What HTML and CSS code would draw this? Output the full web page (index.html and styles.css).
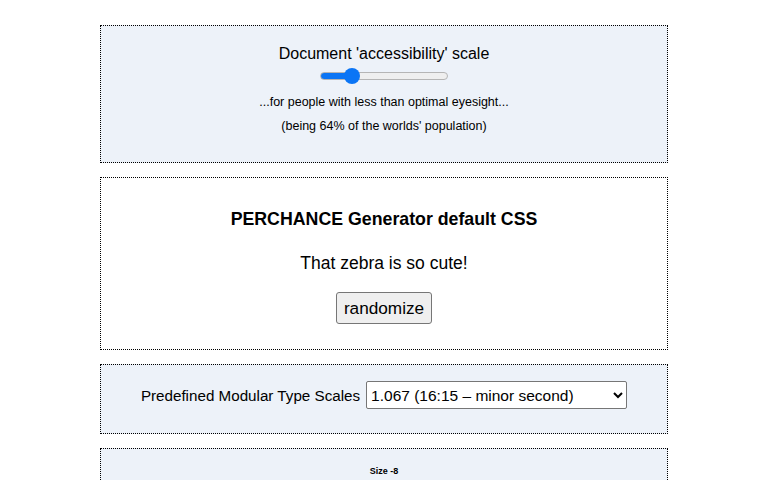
FILE: index.html
```html
<!DOCTYPE html>
<html>
<head>
<meta charset="utf-8">
<link rel="stylesheet" href="styles.css">
</head>
<body>
<div class="page">
  <section class="box tinted scale-box">
    <div class="scale-title">Document 'accessibility' scale</div>
    <input class="slider" type="range" min="0" max="100" value="21">
    <p class="note first">...for people with less than optimal eyesight...</p>
    <p class="note">(being <span class="pct">64%</span> of the worlds' population)</p>
  </section>
  <section class="box plain gen-box">
    <h1 class="gen-title">PERCHANCE Generator default CSS</h1>
    <p class="gen-output">That zebra is so cute!</p>
    <button class="rand-btn">randomize</button>
  </section>
  <section class="box tinted select-box">
    <label class="select-label">Predefined Modular Type Scales</label>
    <select class="scale-select">
      <option>1.067 (16:15 – minor second)</option>
    </select>
  </section>
  <section class="box tinted size-box">
    <div class="size-label">Size -8</div>
  </section>
</div>
</body>
</html>
```
FILE: styles.css
```css
html, body {
  margin: 0;
  padding: 0;
  background: #fff;
  font-family: "Liberation Sans", Arial, sans-serif;
  color: #000;
}
.page {
  width: 568px;
  margin: 25px auto 0;
  display: flex;
  flex-direction: column;
  gap: 14px;
}
.box {
  border: 1px dotted #000;
  box-sizing: border-box;
  text-align: center;
}
.tinted { background: #edf2f9; }
.plain { background: #fff; }
.scale-box {
  height: 138px;
  padding-top: 18px;
}
.scale-title {
  font-size: 16px;
  line-height: 20px;
}
.slider {
  -webkit-appearance: none;
  appearance: none;
  display: block;
  margin: 8px auto 0;
  width: 128px;
  height: 8px;
  border-radius: 4px;
  border: 1px solid #b5b5b5;
  box-sizing: border-box;
  background: linear-gradient(to right, #0b75f5 0, #0b75f5 21%, #efefef 21%);
  outline: none;
}
.slider::-webkit-slider-thumb {
  -webkit-appearance: none;
  appearance: none;
  width: 16px;
  height: 16px;
  border-radius: 50%;
  background: #0b75f5;
  border: none;
}
.note {
  margin: 0;
  font-size: 12.5px;
  line-height: 24px;
}
.note.first { margin-top: 10px; }
.pct { font-weight: normal; }
.gen-box {
  height: 173px;
  padding-top: 30px;
}
.gen-title {
  margin: 0;
  font-size: 17.75px;
  font-weight: bold;
  line-height: 22px;
}
.gen-output {
  margin: 22px 0 0;
  font-size: 17.5px;
  line-height: 22px;
}
.rand-btn {
  margin-top: 18px;
  font-family: "Liberation Sans", Arial, sans-serif;
  font-size: 17.2px;
  padding: 0;
  width: 96px;
  height: 32px;
  background: #efefef;
  border: 1px solid #767676;
  border-radius: 3px;
  color: #000;
}
.select-box {
  height: 70px;
  display: flex;
  align-items: center;
  justify-content: center;
  gap: 6px;
  padding-bottom: 8px;
}
.select-label {
  font-size: 15.2px;
}
.scale-select {
  width: 261px;
  height: 28px;
  font-family: "Liberation Sans", Arial, sans-serif;
  font-size: 15.5px;
  background: #fff;
  border: 1px solid #767676;
  border-radius: 2px;
  color: #000;
}
.size-box {
  height: 60px;
  padding-top: 17px;
}
.size-label {
  font-size: 9px;
  font-weight: bold;
}
```
